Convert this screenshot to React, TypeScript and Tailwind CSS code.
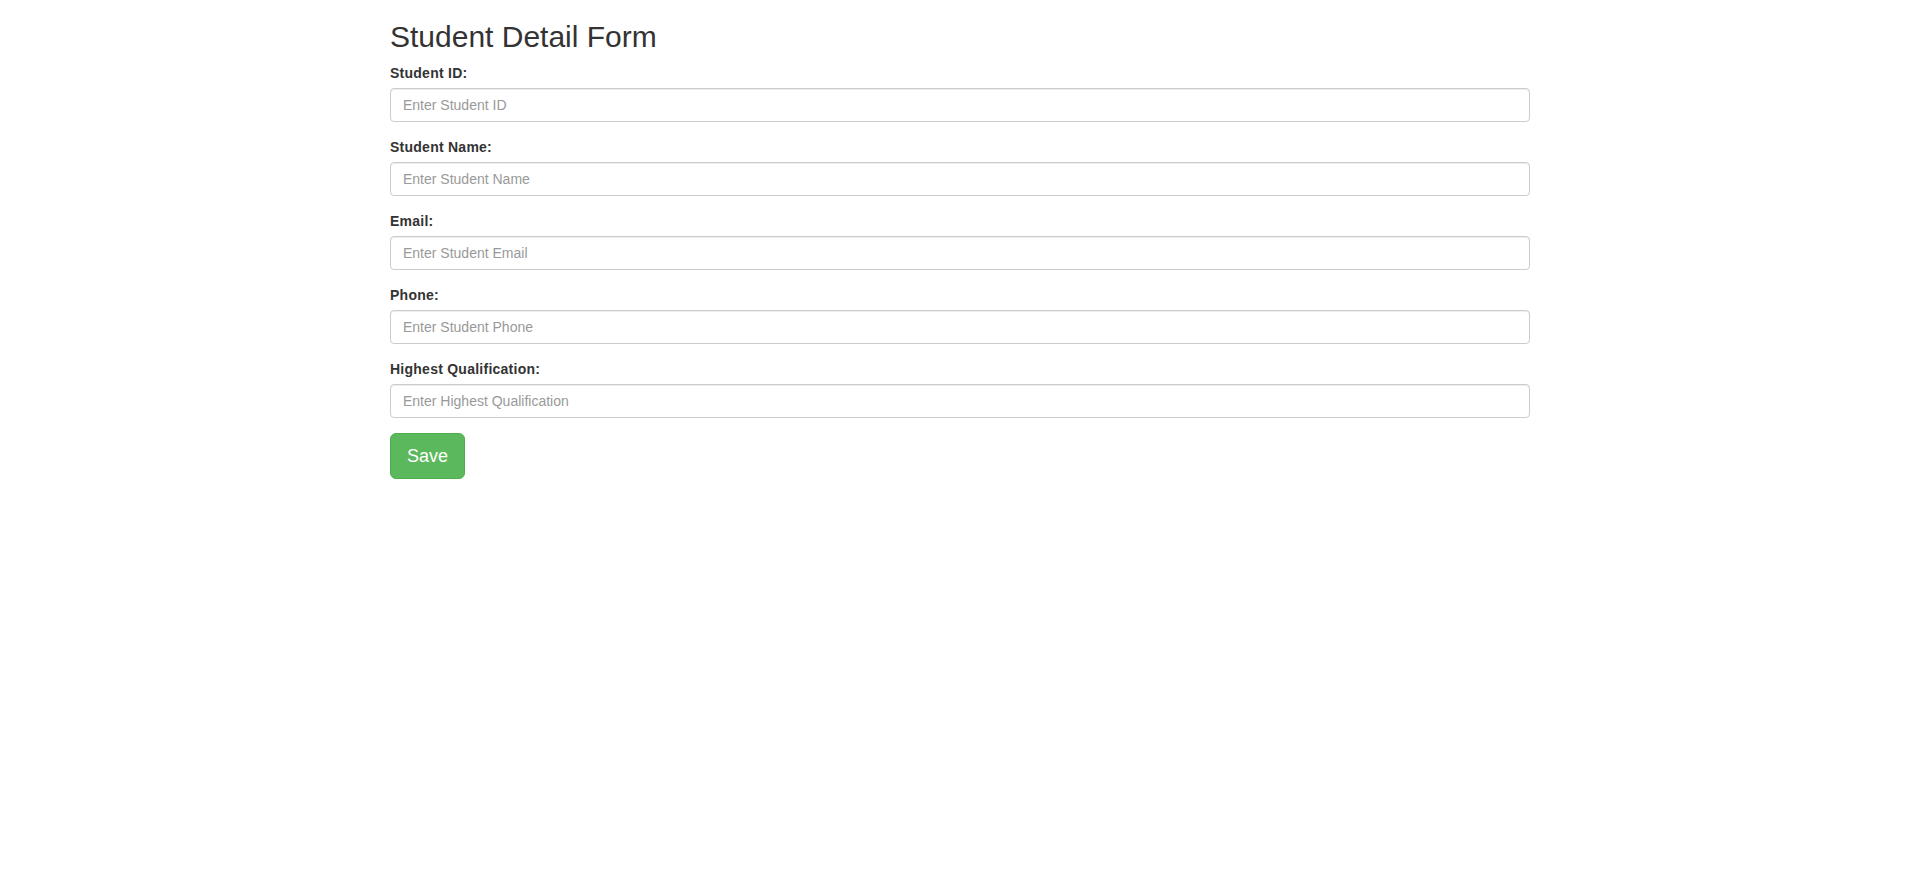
import React from 'react';

const fields = [
  { id: 'studentId', label: 'Student ID:', placeholder: 'Enter Student ID' },
  { id: 'studentName', label: 'Student Name:', placeholder: 'Enter Student Name' },
  { id: 'email', label: 'Email:', placeholder: 'Enter Student Email' },
  { id: 'phone', label: 'Phone:', placeholder: 'Enter Student Phone' },
  { id: 'qualification', label: 'Highest Qualification:', placeholder: 'Enter Highest Qualification' },
];

export default function App() {
  return (
    <div className="min-h-screen bg-white text-[14px] leading-[20px] text-[#333333] font-['Liberation_Sans',Arial,sans-serif]">
      <div className="mx-auto w-[1170px] px-[15px]">
        {/* Title */}
        <h2 className="mt-[20px] mb-[10px] text-[30px] leading-[33px] font-normal">Student Detail Form</h2>

        <form onSubmit={e => e.preventDefault()}>
          {fields.map(f => (
            <div key={f.id} className="mb-[15px]">
              <label htmlFor={f.id} className="inline-block mb-[5px] font-bold tracking-[0.25px]">
                {f.label}
              </label>
              <input
                id={f.id}
                type="text"
                placeholder={f.placeholder}
                className="block w-full h-[34px] px-[12px] py-[6px] text-[14px] text-[#555555] bg-white border border-[#cccccc] rounded-[4px] shadow-[inset_0_1px_1px_rgba(0,0,0,0.075)] placeholder:text-[#999999] outline-none"
              />
            </div>
          ))}

          <button
            type="submit"
            className="px-[16px] py-[10px] text-[18px] leading-[24px] text-white bg-[#5cb85c] border border-[#4cae4c] rounded-[6px]"
          >
            Save
          </button>
        </form>
      </div>
    </div>
  );
}
